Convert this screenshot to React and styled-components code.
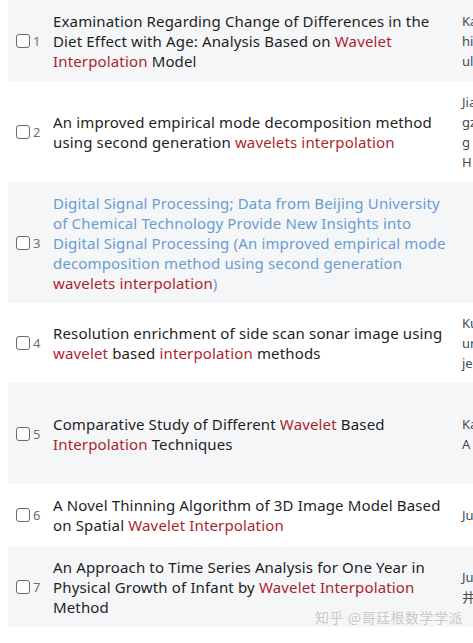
import React from 'react';
import styled, { createGlobalStyle } from 'styled-components';

const GlobalStyle = createGlobalStyle`
  html, body {
    margin: 0;
    padding: 0;
    background: #fff;
    overflow: hidden;
  }
  body {
    padding-left: 8px;
    font-family: "Noto Sans", "Noto Sans CJK SC", sans-serif;
  }
`;

const Page = styled.div`
  position: relative;
  width: 465px;
  height: 643px;
  overflow: hidden;
`;

const Table = styled.div`
  width: 640px;
`;

const Row = styled.div`
  display: grid;
  grid-template-columns: 45px 409px 186px;
  align-items: center;
  min-height: ${(p) => p.minH}px;
  background: ${(p) => (p.striped ? '#f5f6f8' : '#fff')};
`;

const CheckCell = styled.div`
  display: flex;
  align-items: center;
  padding-left: 8px;
  gap: 3px;
`;

const Box = styled.span`
  width: 14px;
  height: 14px;
  border: 1px solid #6b6b6b;
  border-radius: 3px;
  background: #fff;
  box-sizing: border-box;
`;

const Num = styled.span`
  font-size: 13px;
  color: #6f6f6f;
  line-height: 14px;
`;

const Title = styled.div`
  padding: 10px 14px 10px 0;
  font-size: 15px;
  line-height: 20px;
  letter-spacing: 0.15px;
  color: ${(p) => (p.linked ? '#6a9dd1' : '#1e1e1e')};
`;

const Hl = styled.span`
  color: #ae1f2c;
`;

const Authors = styled.div`
  padding: 10px 0;
  font-size: 13px;
  line-height: 20px;
  color: #4a4a4a;
  white-space: nowrap;
`;

const Watermark = styled.div`
  position: absolute;
  left: 307px;
  top: 608px;
  font-size: 14px;
  line-height: 18px;
  color: #c9c9c9;
  letter-spacing: 0.5px;
  white-space: nowrap;
  font-family: "Noto Sans CJK SC", sans-serif;
`;

const rows = [
  {
    h: 81,
    title: [
      'Examination Regarding Change of Differences in the Diet Effect with Age: Analysis Based on ',
      ['Wavelet'],
      ' ',
      ['Interpolation'],
      ' Model',
    ],
    authors: ['Kato Yuichi;', 'hiroshi', 'ulrich'],
  },
  {
    h: 101,
    title: [
      'An improved empirical mode decomposition method using second generation ',
      ['wavelets interpolation'],
    ],
    authors: ['Jiang Pu;', 'gz', 'g', 'H'],
  },
  {
    h: 121,
    linked: true,
    title: [
      'Digital Signal Processing; Data from Beijing University of Chemical Technology Provide New Insights into Digital Signal Processing (An improved empirical mode decomposition method using second generation ',
      ['wavelets interpolation'],
      ')',
    ],
    authors: [],
  },
  {
    h: 79,
    title: [
      'Resolution enrichment of side scan sonar image using ',
      ['wavelet'],
      ' based ',
      ['interpolation'],
      ' methods',
    ],
    authors: ['Kumar', 'ur', 'je'],
  },
  {
    h: 101,
    title: [
      'Comparative Study of Different ',
      ['Wavelet'],
      ' Based ',
      ['Interpolation'],
      ' Techniques',
    ],
    authors: ['Kaur', 'A'],
  },
  {
    h: 62,
    title: [
      'A Novel Thinning Algorithm of 3D Image Model Based on Spatial ',
      ['Wavelet Interpolation'],
    ],
    authors: ['Ju'],
  },
  {
    h: 81,
    title: [
      'An Approach to Time Series Analysis for One Year in Physical Growth of Infant by ',
      ['Wavelet Interpolation'],
      ' Method',
    ],
    authors: ['Ju', '井'],
  },
];

export default function App() {
  return (
    <Page>
      <GlobalStyle />
      <Table>
        {rows.map((r, i) => (
          <Row key={i} striped={i % 2 === 0} minH={r.h}>
            <CheckCell>
              <Box />
              <Num>{i + 1}</Num>
            </CheckCell>
            <Title linked={r.linked}>
              {r.title.map((t, j) =>
                Array.isArray(t) ? <Hl key={j}>{t[0]}</Hl> : <span key={j}>{t}</span>
              )}
            </Title>
            <Authors>
              {r.authors.map((a, j) => (
                <div key={j}>{a}</div>
              ))}
            </Authors>
          </Row>
        ))}
      </Table>
      <Watermark>知乎 @哥廷根数学学派</Watermark>
    </Page>
  );
}
